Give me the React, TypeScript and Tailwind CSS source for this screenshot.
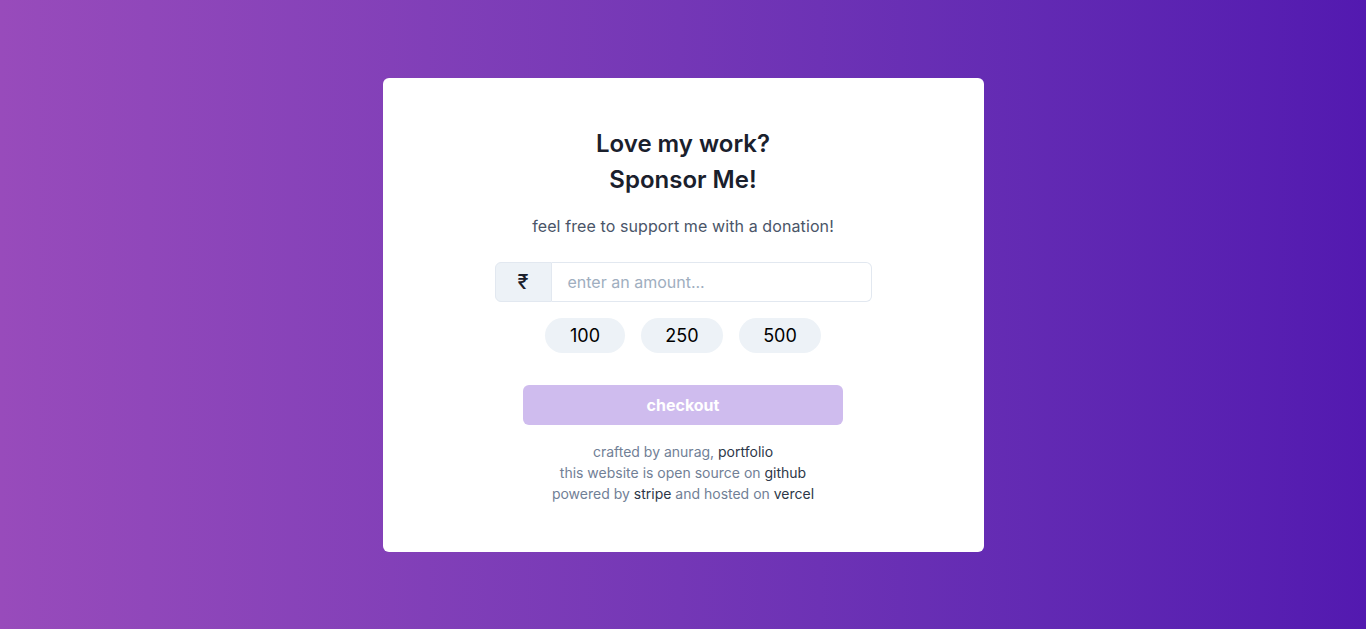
import React from "react";

export default function App() {
  return (
    <div
      className="w-full h-[629px] flex items-center justify-center bg-gradient-to-r from-[#984bbb] to-[#5319b0]"
      style={{ fontFamily: "Inter, 'Noto Sans', sans-serif" }}
    >
      <div className="w-[601px] h-[474px] bg-white rounded-md pt-[48px] flex flex-col items-center">
        <h1 className="text-[24px] leading-[36px] font-semibold text-[#1a202c] text-center">
          Love my work?
          <br />
          Sponsor Me!
        </h1>
        <p className="mt-[16px] text-[16px] leading-[24px] tracking-[0.1px] text-[#4a5568]">
          feel free to support me with a donation!
        </p>
        <div className="mt-[24px] w-[377px] h-[40px] flex">
          <div className="w-[57px] h-full flex items-center justify-center bg-[#edf2f7] border border-[#e2e8f0] rounded-l-md text-[20px] font-medium text-[#1a202c]">
            ₹
          </div>
          <div className="flex-1 h-full flex items-center px-4 border border-l-0 border-[#e2e8f0] rounded-r-md text-[16px] text-[#a0aec0]">
            enter an amount...
          </div>
        </div>
        <div className="mt-[16px] flex gap-4">
          <div className="w-[80px] h-[35px] rounded-full bg-[#edf2f7] flex items-center justify-center text-[18px] text-black">
            100
          </div>
          <div className="w-[82px] h-[35px] rounded-full bg-[#edf2f7] flex items-center justify-center text-[18px] text-black">
            250
          </div>
          <div className="w-[82px] h-[35px] rounded-full bg-[#edf2f7] flex items-center justify-center text-[18px] text-black">
            500
          </div>
        </div>
        <div className="mt-[32px] w-[320px] h-[40px] rounded-md bg-[#cfbcee] flex items-center justify-center text-white font-bold text-[16px]">
          checkout
        </div>
        <div className="mt-[16px] text-[14px] leading-[21px] text-[#718096] text-center">
          <p>
            crafted by anurag, <span className="text-[#2d3748]">portfolio</span>
          </p>
          <p>
            this website is open source on <span className="text-[#2d3748]">github</span>
          </p>
          <p>
            powered by <span className="text-[#2d3748]">stripe</span> and hosted on{" "}
            <span className="text-[#2d3748]">vercel</span>
          </p>
        </div>
      </div>
    </div>
  );
}
